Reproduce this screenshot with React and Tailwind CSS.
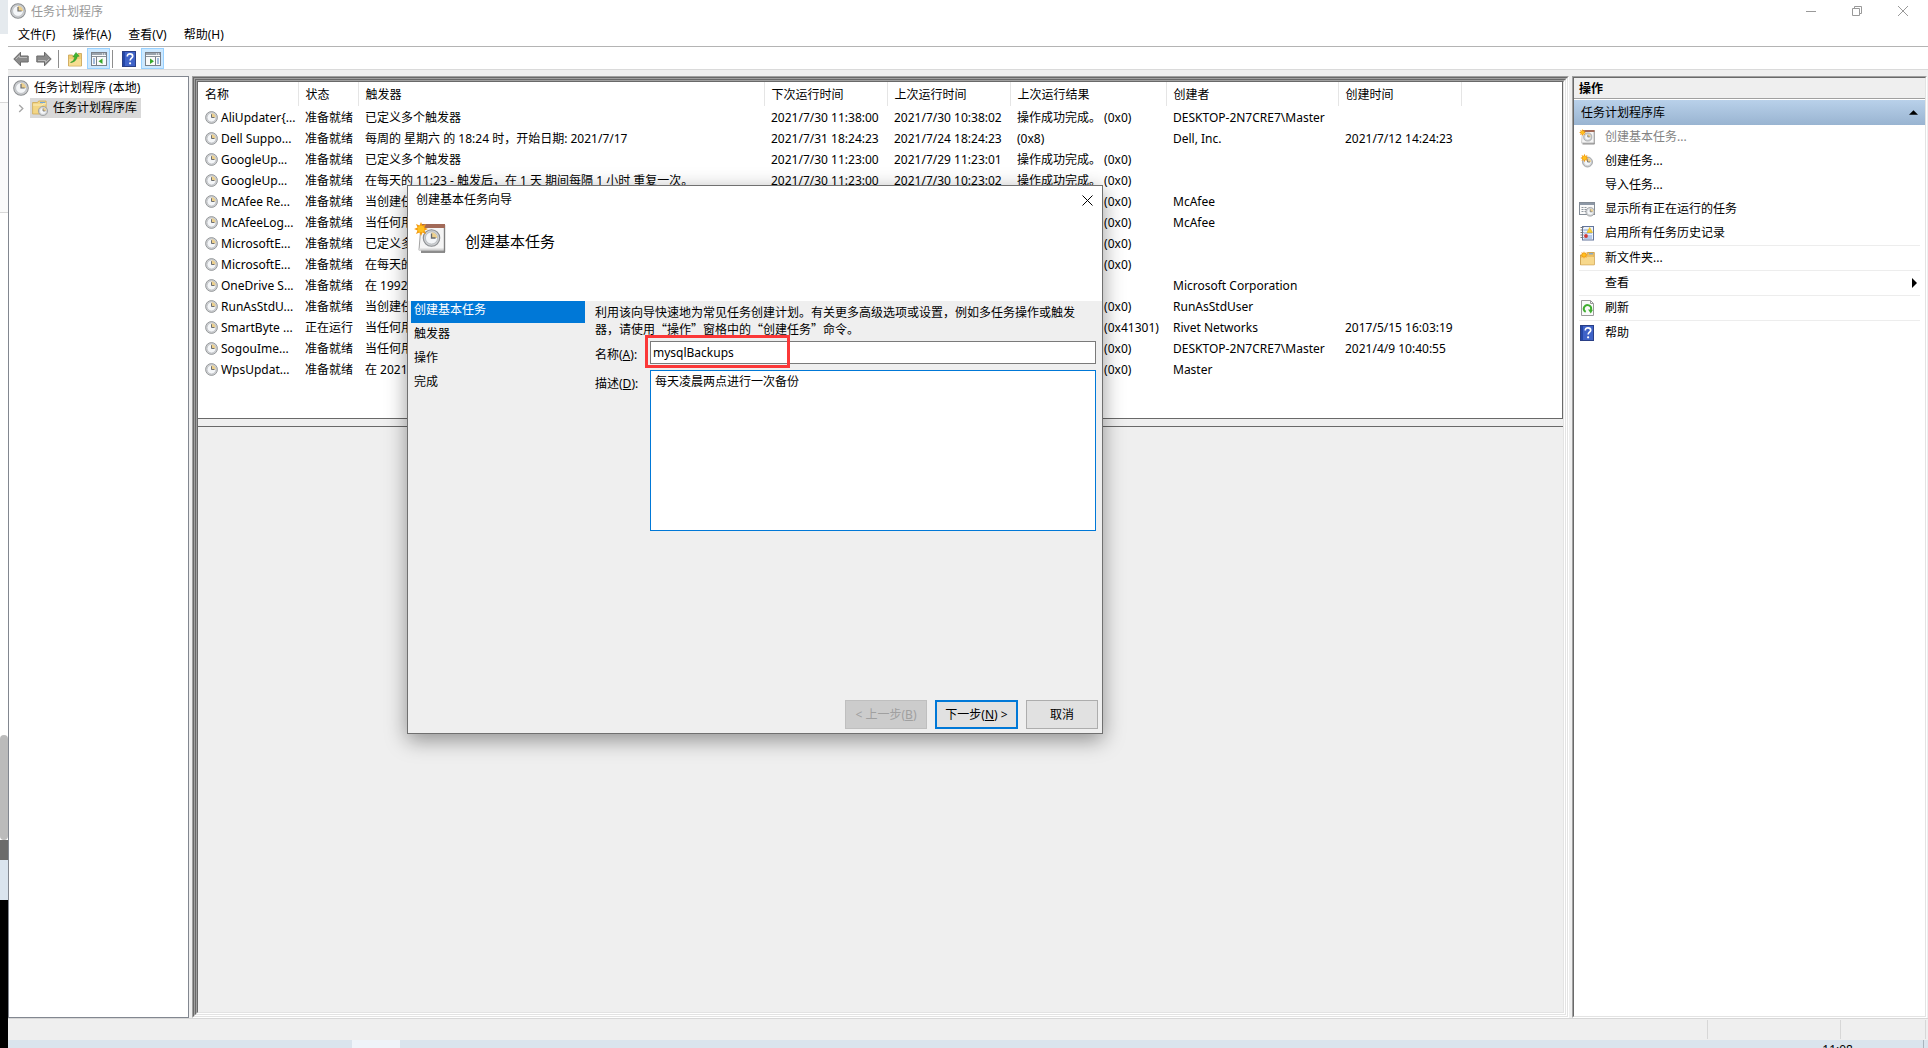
import { useState } from 'react';

const COLUMNS = [
  { label: '名称', width: 'w-[100px]' },
  { label: '状态', width: 'w-[60px]' },
  { label: '触发器', width: 'w-[406px]' },
  { label: '下次运行时间', width: 'w-[123px]' },
  { label: '上次运行时间', width: 'w-[123px]' },
  { label: '上次运行结果', width: 'w-[156px]' },
  { label: '创建者', width: 'w-[172px]' },
  { label: '创建时间', width: 'w-[123px]' },
];

const TASKS = [
  ['AliUpdater{...', '准备就绪', '已定义多个触发器', '2021/7/30 11:38:00', '2021/7/30 10:38:02', '操作成功完成。 (0x0)', 'DESKTOP-2N7CRE7\\Master', ''],
  ['Dell Suppo...', '准备就绪', '每周的 星期六 的 18:24 时，开始日期: 2021/7/17', '2021/7/31 18:24:23', '2021/7/24 18:24:23', '(0x8)', 'Dell, Inc.', '2021/7/12 14:24:23'],
  ['GoogleUp...', '准备就绪', '已定义多个触发器', '2021/7/30 11:23:00', '2021/7/29 11:23:01', '操作成功完成。 (0x0)', '', ''],
  ['GoogleUp...', '准备就绪', '在每天的 11:23 - 触发后，在 1 天 期间每隔 1 小时 重复一次。', '2021/7/30 11:23:00', '2021/7/30 10:23:02', '操作成功完成。 (0x0)', '', ''],
  ['McAfee Re...', '准备就绪', '当创建任务', '', '', '操作成功完成。 (0x0)', 'McAfee', ''],
  ['McAfeeLog...', '准备就绪', '当任何用户', '', '', '操作成功完成。 (0x0)', 'McAfee', ''],
  ['MicrosoftE...', '准备就绪', '已定义多个', '', '', '操作成功完成。 (0x0)', '', ''],
  ['MicrosoftE...', '准备就绪', '在每天的', '', '', '操作成功完成。 (0x0)', '', ''],
  ['OneDrive S...', '准备就绪', '在 1992', '', '', '', 'Microsoft Corporation', ''],
  ['RunAsStdU...', '准备就绪', '当创建任务', '', '', '操作成功完成。 (0x0)', 'RunAsStdUser', ''],
  ['SmartByte ...', '正在运行', '当任何用户', '', '', '操作成功完成。 (0x41301)', 'Rivet Networks', '2017/5/15 16:03:19'],
  ['SogouIme...', '准备就绪', '当任何用户', '', '', '操作成功完成。 (0x0)', 'DESKTOP-2N7CRE7\\Master', '2021/4/9 10:40:55'],
  ['WpsUpdat...', '准备就绪', '在 2021', '', '', '操作成功完成。 (0x0)', 'Master', ''],
];

const MENUS = ['文件(F)', '操作(A)', '查看(V)', '帮助(H)'];

const STEPS = ['创建基本任务', '触发器', '操作', '完成'];

function ClockFace({ cx, cy, r }) {
  return (
    <g>
      <circle cx={cx} cy={cy} r={r} fill="#cfd1d3" stroke="#8a8d90" strokeWidth={r * 0.14} />
      <circle cx={cx} cy={cy} r={r * 0.74} fill="#f4f6f8" stroke="#a9adb2" strokeWidth={r * 0.08} />
      <path
        d={`M${cx} ${cy}V${cy - r * 0.7}A${r * 0.7} ${r * 0.7} 0 0 1 ${cx + r * 0.7} ${cy}Z`}
        fill="#ecd08e"
      />
      <path
        d={`M${cx} ${cy - r * 0.55}V${cy}H${cx + r * 0.5}`}
        fill="none"
        stroke="#66696d"
        strokeWidth={r * 0.16}
      />
    </g>
  );
}

function ClockIcon({ className }) {
  return (
    <svg viewBox="0 0 16 16" className={className} aria-hidden="true">
      <ClockFace cx={8} cy={8} r={7.3} />
    </svg>
  );
}

function ArrowIcon({ className }) {
  return (
    <svg viewBox="0 0 16 16" className={className} aria-hidden="true">
      <path d="M.8 8 7.5 1.2V5h7.7v6H7.5v3.8Z" fill="#8b8b8b" stroke="#6a6a6a" strokeWidth="1" />
      <path d="M3 8 6.5 4.5V6.5H14" fill="none" stroke="#b9b9b9" strokeWidth="1" />
    </svg>
  );
}

function FolderUpIcon() {
  return (
    <svg viewBox="0 0 16 16" className="h-4 w-4" aria-hidden="true">
      <path d="M1.5 4h4l1 1.500H10l1-3h3.500V15h-13Z" fill="#f0cd74" stroke="#c8a150" strokeWidth=".8" />
      <path d="M2 8h12v6.600H2Z" fill="#f7dd92" />
      <path d="M3.500 11.500C6 10.500 7.500 8.500 7.800 5.500L5.800 6 9 1.500l3.200 3.700-2 .2C9.800 8.800 7.500 11.200 3.500 11.500Z" fill="#3fb832" stroke="#2a8a20" strokeWidth=".5" />
    </svg>
  );
}

function PaneIcon({ flip }) {
  return (
    <svg viewBox="0 0 16 14" className="h-[14px] w-4" aria-hidden="true">
      <rect x=".5" y=".5" width="15" height="13" fill="#fafafa" stroke="#7a8089" />
      <rect x="1" y="1" width="14" height="2" fill="#9aa3ad" />
      <path d="M11 2h1M13 2h1" stroke="#fff" />
      <path d="M1 4.500h14" stroke="#8a919a" />
      {flip ? (
        <>
          <path d="M10.500 5v8.500" stroke="#7a8089" />
          <path d="M12 7h2M12 9h2M12 11h2" stroke="#4d7fc4" />
          <path d="M5 6.500v5.500l4-2.750Z" fill="#35a82b" />
        </>
      ) : (
        <>
          <path d="M5.500 5v8.500" stroke="#7a8089" />
          <path d="M2 7h2M2 9h2M2 11h2" stroke="#4d7fc4" />
          <path d="M11.500 6.500v5.500l-4-2.750Z" fill="#35a82b" />
        </>
      )}
    </svg>
  );
}

function HelpIcon() {
  return (
    <svg viewBox="0 0 14 16" className="h-4 w-[14px]" aria-hidden="true">
      <rect x=".5" y=".5" width="13" height="15" fill="#3f63c8" stroke="#2a3f86" />
      <rect x="1" y="1" width="2" height="14" fill="#2447a8" />
      <path d="M5.300 5.400C5.300 3.600 6.500 2.800 8 2.800s2.700.9 2.700 2.400c0 2-2.500 2.100-2.500 4.300" fill="none" stroke="#fff" strokeWidth="1.700" />
      <circle cx="8.100" cy="12.300" r="1.100" fill="#fff" />
    </svg>
  );
}

function LibraryIcon() {
  return (
    <svg viewBox="0 0 16 16" className="h-4 w-4" aria-hidden="true">
      <path d="M.6 2.500h5l1-1.500h7.500v13H.6Z" fill="#f3d684" stroke="#cfa955" strokeWidth=".8" />
      <path d="M8 2.500h5" stroke="#6fa6dc" strokeWidth="1.200" />
      <path d="M1 5h9l1-1.200h3" fill="none" stroke="#fbeec0" />
      <ClockFace cx={11} cy={11} r={4.6} />
    </svg>
  );
}

function Star({ cx, cy, s }) {
  return (
    <g transform={`translate(${cx} ${cy}) scale(${s})`}>
      <path
        d="M0-7 1.500-3.500 5-5 3.500-1.500 7 0 3.500 1.500 5 5 1.500 3.500 0 7-1.500 3.500-5 5-3.500 1.500-7 0-3.500-1.500-5-5-1.500-3.500Z"
        fill="#f39c12"
      />
      <circle r="3.300" fill="#ffc01e" />
    </g>
  );
}

function BasicTaskIcon({ className }) {
  return (
    <svg viewBox="0 0 32 32" className={className} aria-hidden="true">
      <path d="M7 28h24v3H7Z" fill="#8c8c8c" />
      <path d="M7 3h23.500v25H5Z" fill="#f5f5f5" stroke="#a3a3a3" strokeWidth="1" />
      <path d="M4.500 26.500h26v2h-26Z" fill="#d6d6d6" />
      <path d="M30.500 3v27" stroke="#808080" strokeWidth="1.400" />
      <path d="M7 2h24v4H7Z" fill="#a26a58" />
      <ClockFace cx={17.500} cy={16} r={8.200} />
      <Star cx={7} cy={7} s={1} />
    </svg>
  );
}

function NewTaskIcon() {
  return (
    <svg viewBox="0 0 16 16" className="h-4 w-4" aria-hidden="true">
      <ClockFace cx={8.500} cy={9} r={5} />
      <Star cx={5.500} cy={5} s={0.6} />
    </svg>
  );
}

function RunningIcon() {
  return (
    <svg viewBox="0 0 16 16" className="h-4 w-4" aria-hidden="true">
      <rect x=".5" y="1.500" width="15" height="12" fill="#fafafa" stroke="#858d97" />
      <path d="M1 3h14" stroke="#8d98a6" strokeWidth="2" />
      <path d="M2.500 6.500h2M5.500 6.500h2M2.500 8.500h2M5.500 8.500h2M2.500 10.500h2M5.500 10.500h2" stroke="#8f969e" />
      <ClockFace cx={11.200} cy={10.800} r={4.400} />
    </svg>
  );
}

function HistoryIcon() {
  return (
    <svg viewBox="0 0 16 16" className="h-4 w-4" aria-hidden="true">
      <rect x="3.500" y="1.500" width="11" height="13.500" fill="#eef3fb" stroke="#62759c" />
      <path d="M5 5h4M5 8h8M5 11h8M5 13h8" stroke="#7fa0d6" />
      <path d="M1.500 2.500h3M1.500 5h3M1.500 7.500h3M1.500 10h3M1.500 12.500h3" stroke="#777" />
      <path d="m10.700 2.500 2.800 5H8Z" fill="#f6cf2f" stroke="#d8a700" strokeWidth=".5" />
      <circle cx="7" cy="11" r="1.900" fill="#d33a35" />
    </svg>
  );
}

function NewFolderIcon() {
  return (
    <svg viewBox="0 0 16 16" className="h-4 w-4" aria-hidden="true">
      <path d="M1.500 5h6l1-2.500h6.800v12.300H1.500Z" fill="#eebf62" stroke="#c7953b" strokeWidth=".8" />
      <path d="M2 7h13v7.500H2Z" fill="#f7d88c" />
      <path d="M10 3.800h4" stroke="#6fa6dc" strokeWidth="1.200" />
      <Star cx={5} cy={5} s={0.55} />
    </svg>
  );
}

function RefreshIcon() {
  return (
    <svg viewBox="0 0 16 16" className="h-4 w-4" aria-hidden="true">
      <path d="M2.500.5h9l3 3v12h-12Z" fill="#fafafa" stroke="#9a9a9a" />
      <path d="M11.500.5v3h3" fill="none" stroke="#9a9a9a" />
      <path d="M6.700 11.800A3.600 3.600 0 1 1 11.800 10" fill="none" stroke="#3fae2f" strokeWidth="2" />
      <path d="m9 9.500 5 .3-2.200 3.700Z" fill="#3fae2f" />
    </svg>
  );
}

// Nested 3D edges: dark on the top and left, light on the bottom and right
function SunkenFrame({ depth = 1, children }) {
  const inner = depth > 1 ? <SunkenFrame depth={depth - 1}>{children}</SunkenFrame> : children;
  return (
    <div className="flex min-h-0 min-w-0 flex-1 border border-t-[#a0a0a0] border-r-white border-b-white border-l-[#a0a0a0]">
      <div className="flex min-h-0 min-w-0 flex-1 flex-col border border-t-[#696969] border-r-[#e3e3e3] border-b-[#e3e3e3] border-l-[#696969]">
        {inner}
      </div>
    </div>
  );
}

function DesktopEdge() {
  return (
    <div className="flex w-2 shrink-0 flex-col bg-white">
      <div className="h-[34px] bg-[#e5eaee]" />
      <div className="h-[68px]" />
      <div className="h-[110px] border-t border-[#d8d8d8] bg-[#fafafa]" />
      <div className="flex-1 border-t border-[#d8d8d8]" />
      <div className="h-[105px] rounded-full bg-[#bbbbbb]" />
      <div className="h-5 bg-[#6b6b6b]" />
      <div className="h-10 bg-[#dae4ee]" />
      <div className="h-[148px] bg-black" />
    </div>
  );
}

function TitleBar() {
  return (
    <header className="flex h-[22px] items-center bg-white pr-[2px] pl-[2px]">
      <ClockIcon className="h-4 w-4" />
      <h1 className="ml-[5px] flex-1 pt-[2px] text-[#999999]">任务计划程序</h1>
      <button type="button" aria-label="最小化" className="flex h-5 w-[46px] items-center justify-center">
        <svg viewBox="0 0 10 10" className="h-[10px] w-[10px]">
          <path d="M0 5.500h10" stroke="#999" />
        </svg>
      </button>
      <button type="button" aria-label="还原" className="flex h-5 w-[46px] items-center justify-center">
        <svg viewBox="0 0 10 10" className="h-[10px] w-[10px]" fill="none" stroke="#999">
          <path d="M.5 2.500h7v7h-7ZM2.500 2.500v-2h7v7h-2" />
        </svg>
      </button>
      <button type="button" aria-label="关闭" className="flex h-5 w-[46px] items-center justify-center">
        <svg viewBox="0 0 10 10" className="h-[10px] w-[10px]" stroke="#999">
          <path d="m0 0 10 10M10 0 0 10" />
        </svg>
      </button>
    </header>
  );
}

function Toolbar() {
  return (
    <div className="flex h-[23px] items-center border-b border-[#dadada] bg-white pt-px pl-[5px]">
      <button type="button" aria-label="后退">
        <ArrowIcon className="h-4 w-4" />
      </button>
      <button type="button" aria-label="前进" className="ml-[7px]">
        <ArrowIcon className="h-4 w-4 rotate-180" />
      </button>
      <span className="ml-[6px] h-[18px] w-px bg-[#8d8d8d]" />
      <button type="button" aria-label="向上" className="ml-2">
        <FolderUpIcon />
      </button>
      <button type="button" aria-label="显示/隐藏控制台树" className="ml-1 flex h-[21px] w-[23px] items-center justify-center border border-[#99d1ff] bg-[#cce8ff]">
        <PaneIcon />
      </button>
      <span className="ml-[2px] h-[18px] w-px bg-[#8d8d8d]" />
      <button type="button" aria-label="帮助" className="ml-[9px]">
        <HelpIcon />
      </button>
      <button type="button" aria-label="显示/隐藏操作窗格" className="ml-[5px] flex h-[21px] w-[23px] items-center justify-center border border-[#99d1ff] bg-[#cce8ff]">
        <PaneIcon flip />
      </button>
    </div>
  );
}

function TaskTree() {
  return (
    <aside className="w-[181px] shrink-0 border border-[#828790] bg-white pt-px">
      <ul>
        <li className="flex h-5 items-center pl-1">
          <ClockIcon className="h-4 w-4" />
          <span className="ml-[5px]">任务计划程序 (本地)</span>
        </li>
        <li className="flex h-5 items-center pl-[9px]">
          <svg viewBox="0 0 6 10" className="h-[9px] w-[6px]" fill="none" stroke="#a6a6a6" strokeWidth="1.500">
            <path d="m1 1 4 4-4 4" />
          </svg>
          <span className="ml-[6px] flex h-5 items-center bg-[#d9d9d9] pr-1 pl-[2px]">
            <LibraryIcon />
            <span className="ml-[5px]">任务计划程序库</span>
          </span>
        </li>
      </ul>
    </aside>
  );
}

function TaskTable() {
  return (
    <div className="h-[337px] overflow-hidden border-r border-b border-[#696969] bg-white">
      <table className="w-full table-fixed border-collapse text-left whitespace-nowrap">
        <thead>
          <tr className="h-6">
            {COLUMNS.map((col) => (
              <th key={col.label} className={`border-r border-[#e5e5e5] p-0 pt-[2px] pl-[7px] font-normal ${col.width}`}>
                {col.label}
              </th>
            ))}
            <th className="p-0" />
          </tr>
        </thead>
        <tbody>
          {TASKS.map((task, i) => (
            <tr key={i} className="h-[21px]">
              {task.map((value, j) => (
                <td key={j} className="overflow-hidden p-0 pt-[2px] pl-[7px]">
                  {j === 0 ? (
                    <span className="flex items-center gap-[3px]">
                      <ClockIcon className="h-[13px] w-[13px] shrink-0" />
                      {value}
                    </span>
                  ) : (
                    value
                  )}
                </td>
              ))}
              <td className="p-0" />
            </tr>
          ))}
        </tbody>
      </table>
    </div>
  );
}

function ActionItem({ icon, label, disabled, submenu }) {
  return (
    <li>
      <button type="button" disabled={disabled} className={`flex h-6 w-full items-center pr-[3px] text-left ${disabled ? 'text-[#838383]' : ''}`}>
        <span className="flex w-4 justify-center">{icon}</span>
        <span className="ml-[10px] flex-1">{label}</span>
        {submenu && (
          <svg viewBox="0 0 5 10" className="h-[10px] w-[5px]">
            <path d="M0 0v10l5-5Z" fill="#000" />
          </svg>
        )}
      </button>
    </li>
  );
}

function ActionsPane() {
  return (
    <aside className="flex w-[355px] shrink-0">
      <SunkenFrame>
        <div className="min-h-0 flex-1 bg-white">
          <h2 className="h-[21px] border-b border-[#a0a0a0] bg-[#efefef] pl-[5px] leading-[22px] font-bold">操作</h2>
          <div className="mt-px flex h-[25px] items-center justify-between bg-linear-to-b from-[#b9d1ea] to-[#99b4d1] pr-[7px] pl-[7px]">
            <span>任务计划程序库</span>
            <svg viewBox="0 0 10 5" className="h-[5px] w-[9px]">
              <path d="M0 5h10L5 0Z" fill="#000" />
            </svg>
          </div>
          <div className="divide-y divide-[#ededed] pr-[5px] pl-[5px]">
            <ul>
              <ActionItem icon={<BasicTaskIcon className="h-4 w-4" />} label="创建基本任务..." disabled />
              <ActionItem icon={<NewTaskIcon />} label="创建任务..." />
              <ActionItem label="导入任务..." />
              <ActionItem icon={<RunningIcon />} label="显示所有正在运行的任务" />
              <ActionItem icon={<HistoryIcon />} label="启用所有任务历史记录" />
            </ul>
            <ul>
              <ActionItem icon={<NewFolderIcon />} label="新文件夹..." />
            </ul>
            <ul>
              <ActionItem label="查看" submenu />
            </ul>
            <ul>
              <ActionItem icon={<RefreshIcon />} label="刷新" />
            </ul>
            <ul>
              <ActionItem icon={<HelpIcon />} label="帮助" />
            </ul>
          </div>
        </div>
      </SunkenFrame>
    </aside>
  );
}

function StatusBar() {
  return (
    <footer className="flex h-[22px] border-t border-[#d7d7d7] bg-[#efefef] py-px pr-[2px]">
      <div className="flex-1 border-r border-[#d7d7d7]" />
      <div className="w-[133px] border-r border-[#d7d7d7]" />
      <div className="w-[85px] border-r border-[#d7d7d7]" />
    </footer>
  );
}

function Taskbar() {
  return (
    <div className="flex h-2 overflow-hidden bg-[#dae4ed]">
      <div className="ml-[344px] w-12 bg-[#eff4f9]" />
      <div className="flex-1" />
      <time className="pt-[2px] leading-4">11:08</time>
      <div className="ml-[70px] w-[5px] border-l border-[#a9b4bd]" />
    </div>
  );
}

function TaskWizard() {
  const [name, setName] = useState('mysqlBackups');
  const [description, setDescription] = useState('每天凌晨两点进行一次备份');

  return (
    <section
      role="dialog"
      aria-labelledby="wizard-title"
      className="absolute top-[185px] left-[407px] flex h-[549px] w-[696px] flex-col border border-[#707070] bg-[#efefef] shadow-[0_6px_20px_rgba(0,0,0,0.4)]"
    >
      <div className="h-[115px] shrink-0 bg-white">
        <div className="flex h-7 items-center justify-between pr-[9px] pl-2">
          <h2 id="wizard-title">创建基本任务向导</h2>
          <button type="button" aria-label="关闭">
            <svg viewBox="0 0 11 11" className="h-[11px] w-[11px]" stroke="#000">
              <path d="m.5.5 10 10M10.500.5l-10 10" />
            </svg>
          </button>
        </div>
        <div className="flex items-center gap-[19px] pt-2 pl-[6px]">
          <BasicTaskIcon className="h-8 w-8" />
          <h3 className="pt-[6px] text-[15px] leading-5">创建基本任务</h3>
        </div>
      </div>

      <div className="flex min-h-0 flex-1 pr-[6px] pl-[3px]">
        <ol className="w-[174px] shrink-0">
          {STEPS.map((step, i) => (
            <li key={step} className={`mb-[2px] h-[22px] pl-[3px] leading-[18px] ${i === 0 ? 'bg-[#0078d7] text-white' : ''}`}>
              {step}
            </li>
          ))}
        </ol>
        <form className="ml-[10px] flex-1 pt-[2px]">
          <p className="pr-4 font-['Noto_Sans_CJK_SC',sans-serif] leading-[17px]">
            利用该向导快速地为常见任务创建计划。有关更多高级选项或设置，例如多任务操作或触发器，请使用“操作”窗格中的“创建任务”命令。
          </p>
          <div className="relative mt-1 flex">
            <label htmlFor="task-name" className="w-[55px] shrink-0 pt-[5px] leading-[18px]">
              名称(<u>A</u>):
            </label>
            <input
              id="task-name"
              value={name}
              onChange={(e) => setName(e.target.value)}
              className="h-[23px] min-w-0 flex-1 border border-[#7a7a7a] bg-white px-[2px] outline-none"
            />
            <span className="pointer-events-none absolute -top-[6px] left-[50px] h-[33px] w-[145px] border-[3px] border-[#fb3838]" />
          </div>
          <div className="mt-[6px] flex">
            <label htmlFor="task-description" className="w-[55px] shrink-0 pt-[5px] leading-[18px]">
              描述(<u>D</u>):
            </label>
            <textarea
              id="task-description"
              value={description}
              onChange={(e) => setDescription(e.target.value)}
              className="h-[161px] min-w-0 flex-1 resize-none border border-[#0078d7] bg-white px-1 pt-[2px] leading-[18px] outline-none"
            />
          </div>
        </form>
      </div>

      <div className="flex justify-end gap-2 pr-1 pb-1">
        <button type="button" disabled className="h-[29px] w-[82px] border border-[#bfbfbf] bg-[#cccccc] text-[#a0a0a0]">
          &lt; 上一步(<u>B</u>)
        </button>
        <button type="button" className="h-[29px] w-[83px] border-2 border-[#0078d7] bg-[#e1e1e1]">
          下一步(<u>N</u>) &gt;
        </button>
        <button type="button" className="h-[29px] w-[72px] border border-[#adadad] bg-[#e1e1e1]">
          取消
        </button>
      </div>
    </section>
  );
}

export default function App() {
  return (
    <div className="relative flex h-screen overflow-hidden bg-[#efefef] font-['Noto_Sans','Noto_Sans_CJK_SC',sans-serif] text-xs text-black">
      <DesktopEdge />
      <div className="flex min-w-0 flex-1 flex-col">
        <TitleBar />
        <nav className="flex h-[25px] items-center gap-[17px] border-b border-[#b4b4b4] bg-white pt-[2px] pl-[10px]">
          {MENUS.map((menu) => (
            <button key={menu} type="button">
              {menu}
            </button>
          ))}
        </nav>
        <Toolbar />
        <main className="flex min-h-0 flex-1 pt-[6px] pr-px">
          <TaskTree />
          <div className="mr-[3px] ml-[3px] flex min-w-0 flex-1">
            <SunkenFrame depth={3}>
              <TaskTable />
              <div className="mt-[7px] flex-1 border-t border-[#696969]" />
            </SunkenFrame>
          </div>
          <ActionsPane />
        </main>
        <StatusBar />
        <Taskbar />
      </div>
      <TaskWizard />
    </div>
  );
}
